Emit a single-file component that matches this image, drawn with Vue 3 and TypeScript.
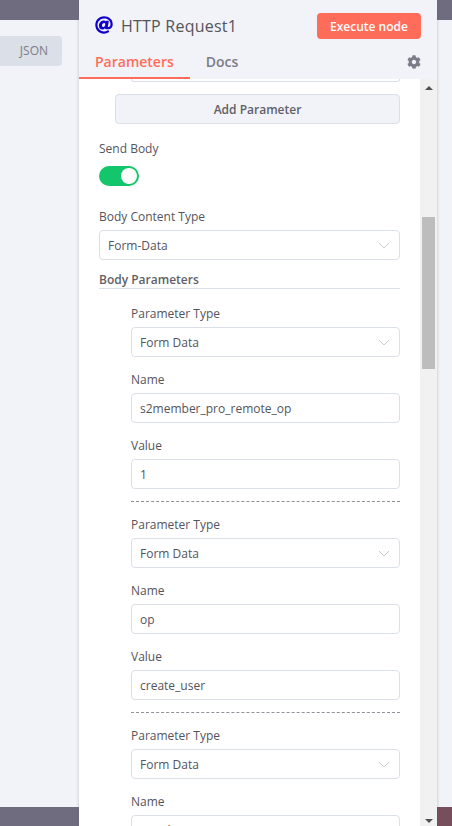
<script setup lang="ts">
interface Field { label: string; value: string; select?: boolean }
const groups: Field[][] = [
  [
    { label: 'Parameter Type', value: 'Form Data', select: true },
    { label: 'Name', value: 's2member_pro_remote_op' },
    { label: 'Value', value: '1' },
  ],
  [
    { label: 'Parameter Type', value: 'Form Data', select: true },
    { label: 'Name', value: 'op' },
    { label: 'Value', value: 'create_user' },
  ],
  [
    { label: 'Parameter Type', value: 'Form Data', select: true },
    { label: 'Name', value: 'email' },
  ],
]
</script>

<template>
  <div class="page">
    <div class="backdrop">
      <div class="strip"></div>
      <div class="middle">
        <div class="json">JSON</div>
      </div>
      <div class="strip bottom"><div class="strip-left"></div><div class="strip-right"></div></div>
    </div>

    <section class="panel">
      <header class="head">
        <div class="title-row">
          <svg class="at" viewBox="0 0 512 512" width="18" height="18">
            <path fill="#1400cc" d="M256 8C118.941 8 8 118.919 8 256c0 137.059 110.919 248 248 248 48.154 0 95.342-14.14 135.408-40.223 12.005-7.815 14.625-24.288 5.552-35.372l-10.177-12.433c-7.671-9.371-21.179-11.667-31.373-5.129C325.92 429.757 291.314 440 256 440c-101.458 0-184-82.542-184-184S154.542 72 256 72c100.139 0 184 57.619 184 160 0 38.786-21.093 79.742-58.17 83.693-17.349-.454-16.91-12.857-13.476-30.024l23.433-121.11C394.653 149.75 383.308 136 368.225 136h-44.981a13.518 13.518 0 0 0-13.432 11.993l-.01.092c-14.697-17.901-40.448-21.775-59.971-21.775-74.58 0-137.831 62.234-137.831 151.46 0 65.303 36.785 105.87 96 105.87 26.984 0 57.369-15.637 74.991-38.333 9.522 34.104 40.613 34.103 70.71 34.103C462.609 379.41 504 307.798 504 232 504 95.653 394.023 8 256 8zm-21.68 304.43c-22.249 0-36.07-15.623-36.07-40.771 0-44.993 30.779-72.729 58.63-72.729 22.292 0 35.601 15.241 35.601 40.77 0 45.061-33.875 72.73-58.161 72.73z"/>
          </svg>
          <span class="title">HTTP Request1</span>
          <button class="run">Execute node</button>
        </div>
        <div class="tabs">
          <span class="tab active">Parameters</span>
          <span class="tab">Docs</span>
          <svg class="gear" viewBox="0 0 512 512" width="14" height="14">
            <path fill="#7c7c88" d="M487.4 315.7l-42.6-24.6c4.3-23.2 4.3-47 0-70.2l42.6-24.6c4.9-2.8 7.1-8.6 5.5-14-11.1-35.6-30-67.8-54.7-94.6-3.8-4.1-10-5.1-14.8-2.3L380.8 110c-17.9-15.4-38.5-27.3-60.8-35.1V25.8c0-5.6-3.9-10.5-9.4-11.7-36.7-8.2-74.3-7.8-109.2 0-5.5 1.2-9.4 6.1-9.4 11.7V75c-22.2 7.9-42.8 19.8-60.8 35.1L88.7 85.5c-4.9-2.8-11-1.9-14.8 2.3-24.7 26.7-43.6 58.9-54.7 94.6-1.7 5.4.6 11.2 5.5 14L67.3 221c-4.3 23.2-4.3 47 0 70.2l-42.6 24.6c-4.9 2.8-7.1 8.6-5.5 14 11.1 35.6 30 67.8 54.7 94.6 3.8 4.1 10 5.1 14.8 2.3l42.6-24.6c17.9 15.4 38.5 27.3 60.8 35.1v49.2c0 5.6 3.9 10.5 9.4 11.7 36.7 8.2 74.3 7.8 109.2 0 5.5-1.2 9.4-6.1 9.4-11.7v-49.2c22.2-7.9 42.8-19.8 60.8-35.1l42.6 24.6c4.9 2.8 11 1.9 14.8-2.3 24.7-26.7 43.6-58.9 54.7-94.6 1.5-5.5-.7-11.3-5.6-14.1zM256 336c-44.1 0-80-35.9-80-80s35.9-80 80-80 80 35.9 80 80-35.9 80-80 80z"/>
          </svg>
        </div>
      </header>

      <div class="body">
        <div class="content">
          <div class="cut-input"></div>
          <button class="add">Add Parameter</button>

          <div class="label send">Send Body</div>
          <div class="toggle"><span class="knob"></span></div>

          <div class="label content-type">Body Content Type</div>
          <div class="box">
            <span>Form-Data</span>
            <svg class="chev" viewBox="0 0 12 7" width="12" height="7"><path d="M1 1l5 5 5-5" fill="none" stroke="#c8ccd4" stroke-width="1"/></svg>
          </div>

          <div class="section">Body Parameters</div>

          <div class="groups">
            <div v-for="(group, g) in groups" :key="g" class="group">
              <div v-for="field in group" :key="field.label" class="field">
                <div class="label">{{ field.label }}</div>
                <div class="box">
                  <span>{{ field.value }}</span>
                  <svg v-if="field.select" class="chev" viewBox="0 0 12 7" width="12" height="7"><path d="M1 1l5 5 5-5" fill="none" stroke="#c8ccd4" stroke-width="1"/></svg>
                </div>
              </div>
            </div>
          </div>
        </div>

        <div class="scrollbar">
          <svg class="arrow" viewBox="0 0 8 4" width="8" height="4"><path d="M0 4l4-4 4 4z" fill="#505050"/></svg>
          <div class="thumb"></div>
          <div class="rest"></div>
          <svg class="arrow" viewBox="0 0 8 4" width="8" height="4"><path d="M0 0l4 4 4-4z" fill="#505050"/></svg>
        </div>
      </div>
    </section>
  </div>
</template>

<style scoped>
.page {
  position: relative;
  width: 452px;
  height: 826px;
  overflow: hidden;
  font-family: "Open Sans", sans-serif;
  color: #54545c;
}
.backdrop {
  display: flex;
  flex-direction: column;
  height: 100%;
}
.strip {
  height: 20px;
  background: #706c80;
}
.strip.bottom {
  height: 19px;
  display: flex;
  background: none;
}
.strip-left {
  flex: 1;
  background: #706c80;
}
.strip-right {
  width: 15px;
  background: #764e5c;
}
.middle {
  flex: 1;
  background: #f2f3f8;
  padding: 16px 0 0;
}
.json {
  width: 62px;
  height: 30px;
  box-sizing: border-box;
  background: #dbdfe7;
  border-radius: 0 4px 4px 0;
  color: #7d7d87;
  font-size: 12px;
  font-weight: 400;
  line-height: 30px;
  text-align: right;
  padding-right: 14px;
}
.panel {
  position: absolute;
  top: 0;
  left: 79px;
  width: 358px;
  height: 826px;
  display: flex;
  flex-direction: column;
  background: #fff;
  box-shadow: 0 0 3px rgba(90, 90, 110, 0.35);
}
.head {
  height: 79px;
  flex: none;
  background: #f1f3f8;
  box-sizing: border-box;
  padding-top: 13px;
}
.title-row {
  display: flex;
  align-items: center;
  height: 26px;
  padding: 0 16px 0 16px;
}
.at {
  flex: none;
  margin-right: 8px;
  margin-top: -2px;
}
.title {
  flex: 1;
  font-size: 16px;
  letter-spacing: 0.23px;
  font-weight: 400;
  color: #54545c;
}
.run {
  width: 104px;
  height: 26px;
  border: 0;
  border-radius: 4px;
  background: #ff6d5a;
  color: #fff;
  font-family: inherit;
  font-size: 12px;
  font-weight: 600;
  padding: 0;
}
.tabs {
  display: flex;
  align-items: center;
  height: 40px;
}
.tab {
  height: 40px;
  box-sizing: border-box;
  padding: 14px 16px 0;
  line-height: 18px;
  font-size: 14px;
  font-weight: 600;
  color: #7d7d87;
}
.tab.active {
  color: #ff6d5a;
  border-bottom: 2px solid #ff6d5a;
}
.gear {
  margin-left: auto;
  margin-right: 16px;
  margin-top: 6px;
}
.body {
  flex: 1;
  min-height: 0;
  display: flex;
}
.content {
  flex: 1;
  min-width: 0;
  overflow: hidden;
  padding: 0 20px 0 20px;
}
.cut-input {
  height: 2px;
  margin-left: 32px;
  border: 1px solid #dbdfe7;
  border-top: 0;
  border-radius: 0 0 4px 4px;
  box-sizing: content-box;
}
.add {
  display: block;
  width: 285px;
  height: 30px;
  margin: 12px 0 0 16px;
  border: 1px solid #dbdfe7;
  border-radius: 4px;
  background: #f1f3f8;
  font-family: inherit;
  font-size: 12px;
  font-weight: 600;
  color: #5f5f68;
  padding: 0;
}
.label {
  font-size: 12px;
  line-height: 16px;
  color: #54545c;
}
.send {
  margin-top: 17px;
}
.toggle {
  width: 40px;
  height: 20px;
  margin-top: 9px;
  border-radius: 10px;
  background: #13c66b;
  box-sizing: border-box;
  padding: 2px 2px 2px 22px;
}
.knob {
  display: block;
  width: 16px;
  height: 16px;
  border-radius: 50%;
  background: #fff;
}
.content-type {
  margin-top: 23px;
  margin-bottom: 5px;
}
.box {
  height: 30px;
  box-sizing: border-box;
  border: 1px solid #dbdfe7;
  border-radius: 4px;
  background: #fff;
  display: flex;
  align-items: center;
  justify-content: space-between;
  padding: 0 9px 0 8px;
  font-size: 12px;
  color: #54545c;
}
.section {
  margin-top: 11px;
  height: 17px;
  line-height: 17px;
  font-size: 12px;
  font-weight: 600;
  color: #5f5f68;
  border-bottom: 1px solid #dbdfe7;
}
.groups {
  padding-left: 32px;
  margin-top: 16px;
}
.group {
  padding-bottom: 12px;
  border-bottom: 1px dashed #909098;
  margin-bottom: 14px;
}
.field + .field {
  margin-top: 14px;
}
.field .label {
  line-height: 18px;
  margin-bottom: 4px;
}
.chev {
  flex: none;
}
.scrollbar {
  width: 17px;
  flex: none;
  background: #f1f1f1;
  display: flex;
  flex-direction: column;
  align-items: center;
  padding: 7px 0 3px;
  box-sizing: border-box;
}
.thumb {
  width: 13px;
  height: 152px;
  margin-top: 127px;
  background: #bdbdbd;
}
.rest {
  flex: 1;
}
</style>
